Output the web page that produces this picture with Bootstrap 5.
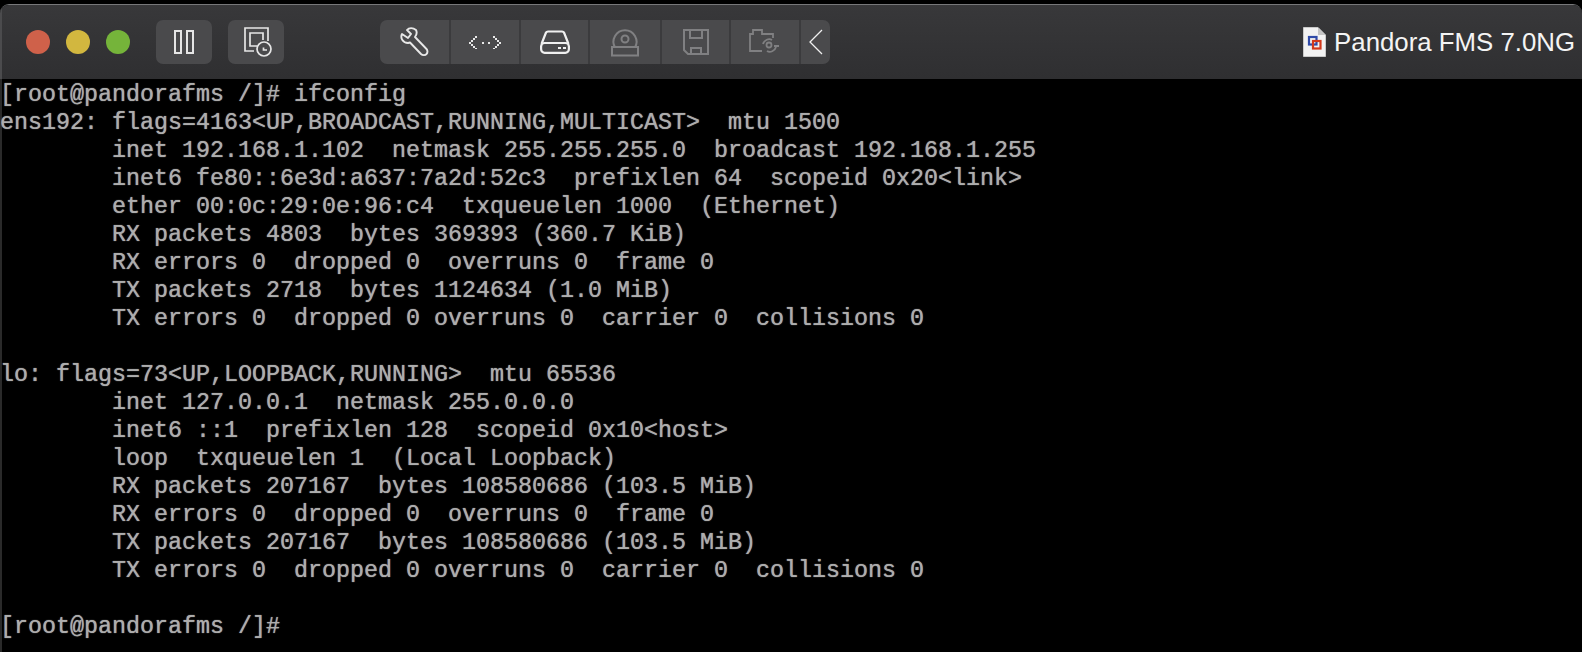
<!DOCTYPE html>
<html lang="en">
<head>
<meta charset="utf-8">
<title>Pandora FMS 7.0NG</title>
<link href="https://cdn.jsdelivr.net/npm/bootstrap@5.3.0/dist/css/bootstrap.min.css" rel="stylesheet">
<style>
html,body{margin:0;height:652px;overflow:hidden;background:#000}
.vm-frame{height:652px;padding-top:4px;background:#000}
.vm-window{height:648px;border-top:1px solid #77787a;border-radius:9px 9px 0 0;overflow:hidden;background:#000}
.vm-bar{height:74px;background:linear-gradient(#38383a,#2f2f31);border-left:2px solid #4b4b4d;padding:15px 7px 15px 24px}
.tl-dot{width:24px;height:24px;border-radius:50%;margin-right:16px}
.tl-red{background:#cf614a}.tl-yellow{background:#d2b73f}.tl-green{background:#75b43a;margin-right:26px}
.tool-one{width:56px;height:44px;background:#4a4a4c;border-radius:7px;margin-right:16px}
.tool-last{margin-right:0;padding-left:3px}
.tool-group{height:44px;background:#4a4a4c;border-radius:7px;margin-left:96px;width:450px;overflow:hidden}
.tool-cell{height:44px;border-right:2px solid #3b3b3d;flex:none}
.tool-cell:last-child{border-right:0}
.vm-file{margin-right:8px}
.vm-title{color:#f4f4f4;font-family:"Liberation Sans",sans-serif;font-size:25.8px;line-height:30px;white-space:nowrap}
.vm-term{margin:0;padding:2px 0 0 0;height:573px;overflow:hidden;background:#000;color:#adadad;font-family:"Liberation Mono",monospace;font-size:23.34px;line-height:28px;box-shadow:inset 2px 0 #2a2a2a;text-shadow:0 0 1px #adadad}
</style>
</head>
<body>
<div class="vm-frame">
<div class="vm-window">
<div class="vm-bar d-flex align-items-center">
<span class="tl-dot tl-red"></span><span class="tl-dot tl-yellow"></span><span class="tl-dot tl-green"></span>
<div class="tool-one d-flex align-items-center justify-content-center">
<svg width="20" height="24" viewBox="0 0 20 24" fill="none" stroke="#e6e6e6" stroke-width="2"><rect x="1" y="1" width="6" height="22"/><rect x="13" y="1" width="6" height="22"/></svg>
</div>
<div class="tool-one tool-last d-flex align-items-center justify-content-center">
<svg width="28" height="30" viewBox="0 0 28 30" fill="none" stroke="#e6e6e6" stroke-width="1.700"><path d="M10 24H1V1h23v13"/><path d="M13 19H6V6h13v7"/><circle cx="20" cy="22" r="7"/><path d="M23 23h-3.500v-2.500"/></svg>
</div>
<div class="tool-group d-flex">
<div class="tool-cell d-flex align-items-center justify-content-center" style="width:71px">
<svg width="30" height="30" viewBox="0 0 30 30" fill="none" stroke="#e8e8e8" stroke-width="1.900" stroke-linejoin="round"><path d="M16 3C13 .5 9 .5 7 3l4 4-3 4-6-4C0 11 3 16 8 16l2-.5L21 27c1.500 1.500 4.500 1.500 5.500 0 1.500-1.500 1-4 0-5L15 10c1.500-2 2-5 1-7z"/></svg>
</div>
<div class="tool-cell d-flex align-items-center justify-content-center" style="width:70px">
<svg width="32" height="14" viewBox="0 0 32 14" fill="#e8e8e8" shape-rendering="crispEdges"><path d="M6 1h2v2H6zM4 3h2v2H4zM2 5h2v2H2zM0 7h2v2H0zM2 9h2v2H2zM4 11h2v2H4zM6 13h2v1H6zM24 1h2v2h-2zM26 3h2v2h-2zM28 5h2v2h-2zM30 7h2v2h-2zM28 9h2v2h-2zM26 11h2v2h-2zM24 13h2v1h-2zM13 7h2v2h-2zM19 7h2v2h-2z"/></svg>
</div>
<div class="tool-cell d-flex align-items-center justify-content-center" style="width:69px">
<svg width="30" height="24" viewBox="0 0 30 24" fill="none" stroke="#f0f0f0" stroke-width="2.200"><path d="M1.500 14 6 2.500Q6.500 1.500 8 1.500h14q1.500 0 2 1L28.500 14"/><rect x="1.100" y="13" width="27.800" height="9.800" rx="3.500"/><path d="M18 18h3M23 18h3" stroke-width="2"/></svg>
</div>
<div class="tool-cell d-flex align-items-center justify-content-center" style="width:72px">
<svg width="30" height="30" viewBox="0 0 30 30" fill="none" stroke="#808082" stroke-width="2"><path d="M5 20.500a11.500 11.500 0 1 1 20 0"/><circle cx="15" cy="12" r="3.500"/><rect x="2" y="20" width="26" height="8.500"/></svg>
</div>
<div class="tool-cell d-flex align-items-center justify-content-center" style="width:69px">
<svg width="26" height="26" viewBox="0 0 26 26" fill="none" stroke="#808082" stroke-width="2"><path d="M1 1h24v24H5l-4-4z"/><path d="M7 1v8h12V1M8 25v-6h10v6"/></svg>
</div>
<div class="tool-cell d-flex align-items-center justify-content-center" style="width:70px">
<svg width="32" height="26" viewBox="0 0 32 26" fill="none" stroke="#808082" stroke-width="1.800"><path d="M13 22H1V5h3V1h9v4h11v4"/><circle cx="20" cy="16" r="2.500"/><path d="M14 15c1-4 6-6 9-4M27 18c-1 4-6 6-9 4M25 17h5"/></svg>
</div>
<div class="tool-cell d-flex align-items-center justify-content-center flex-grow-1">
<svg width="14" height="26" viewBox="0 0 14 26" fill="none" stroke="#f0f0f0" stroke-width="1.300"><path d="M13 1 1 13l12 12"/></svg>
</div>
</div>
<div class="ms-auto d-flex align-items-center">
<svg class="vm-file" width="23" height="30" viewBox="0 0 23 30"><path d="M.500.500H15L22.500 8v21.500H.500z" fill="#f2f2f2" stroke="#c9c9c9"/><path d="M15 .500V8h7.500z" fill="#c4c4c4"/><rect x="6" y="10" width="7.500" height="7.500" fill="none" stroke="#2f4aa8" stroke-width="2.200"/><rect x="10" y="14" width="7.500" height="7.500" fill="none" stroke="#d2391c" stroke-width="2.200"/></svg>
<span class="vm-title">Pandora FMS 7.0NG</span>
</div>
</div>
<pre class="vm-term">[root@pandorafms /]# ifconfig
ens192: flags=4163&lt;UP,BROADCAST,RUNNING,MULTICAST&gt;  mtu 1500
        inet 192.168.1.102  netmask 255.255.255.0  broadcast 192.168.1.255
        inet6 fe80::6e3d:a637:7a2d:52c3  prefixlen 64  scopeid 0x20&lt;link&gt;
        ether 00:0c:29:0e:96:c4  txqueuelen 1000  (Ethernet)
        RX packets 4803  bytes 369393 (360.7 KiB)
        RX errors 0  dropped 0  overruns 0  frame 0
        TX packets 2718  bytes 1124634 (1.0 MiB)
        TX errors 0  dropped 0 overruns 0  carrier 0  collisions 0

lo: flags=73&lt;UP,LOOPBACK,RUNNING&gt;  mtu 65536
        inet 127.0.0.1  netmask 255.0.0.0
        inet6 ::1  prefixlen 128  scopeid 0x10&lt;host&gt;
        loop  txqueuelen 1  (Local Loopback)
        RX packets 207167  bytes 108580686 (103.5 MiB)
        RX errors 0  dropped 0  overruns 0  frame 0
        TX packets 207167  bytes 108580686 (103.5 MiB)
        TX errors 0  dropped 0 overruns 0  carrier 0  collisions 0

[root@pandorafms /]#</pre>
</div>
</div>
<script src="https://cdn.jsdelivr.net/npm/bootstrap@5.3.0/dist/js/bootstrap.bundle.min.js"></script>
</body>
</html>
